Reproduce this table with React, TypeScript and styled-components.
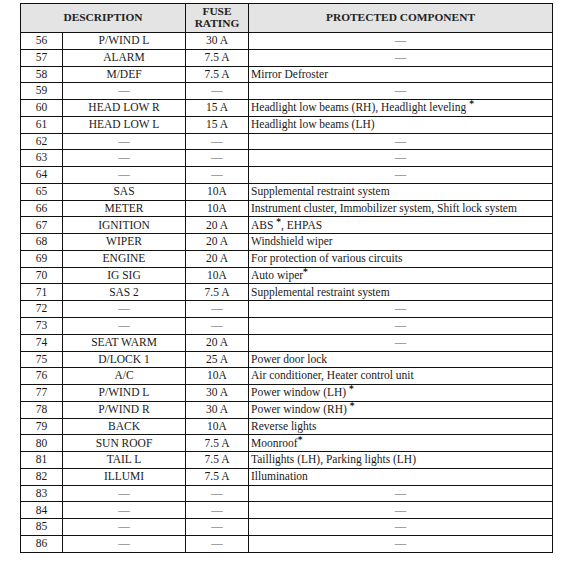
import styled, { createGlobalStyle } from 'styled-components'

const GlobalStyle = createGlobalStyle`
  html, body {
    margin: 0;
    padding: 0;
    background: #ffffff;
  }
  body {
    font-family: "Liberation Serif", "Times New Roman", serif;
    color: #1a1a1a;
  }
`

const Page = styled.div`
  padding: 3px 0 0 20px;
`

const Table = styled.table`
  border-collapse: collapse;
  table-layout: fixed;
  width: 532px;
  font-size: 11.5px;
  line-height: 1;
`

const HeadCell = styled.th`
  background: #e4e4e4;
  border: 1px solid #111;
  font-weight: bold;
  font-size: 11.4px;
  color: #222;
  height: 28px;
  padding: 0;
  text-align: center;
  vertical-align: middle;
  line-height: 1.05;
`

const Cell = styled.td<{ $align?: 'left' | 'center' }>`
  border: 1px solid #111;
  height: 15.77px;
  padding: 0 0 0 ${p => (p.$align === 'left' ? '2px' : '0')};
  text-align: ${p => p.$align ?? 'center'};
  vertical-align: middle;
  white-space: nowrap;
  overflow: hidden;
`

const Dash = styled.span`
  color: #555;
`

const Star = styled.sup`
  font-family: "DejaVu Sans", sans-serif;
  font-size: 9px;
  font-weight: bold;
  line-height: 0;
  vertical-align: 4px;
`

type Row = {
  no: number
  desc?: string
  rating?: string
  comp?: React.ReactNode
}

const rows: Row[] = [
  { no: 56, desc: 'P/WIND L', rating: '30 A' },
  { no: 57, desc: 'ALARM', rating: '7.5 A' },
  { no: 58, desc: 'M/DEF', rating: '7.5 A', comp: 'Mirror Defroster' },
  { no: 59 },
  { no: 60, desc: 'HEAD LOW R', rating: '15 A', comp: <>Headlight low beams (RH), Headlight leveling <Star>*</Star></> },
  { no: 61, desc: 'HEAD LOW L', rating: '15 A', comp: 'Headlight low beams (LH)' },
  { no: 62 },
  { no: 63 },
  { no: 64 },
  { no: 65, desc: 'SAS', rating: '10A', comp: 'Supplemental restraint system' },
  { no: 66, desc: 'METER', rating: '10A', comp: 'Instrument cluster, Immobilizer system, Shift lock system' },
  { no: 67, desc: 'IGNITION', rating: '20 A', comp: <>ABS <Star>*</Star>, EHPAS</> },
  { no: 68, desc: 'WIPER', rating: '20 A', comp: 'Windshield wiper' },
  { no: 69, desc: 'ENGINE', rating: '20 A', comp: 'For protection of various circuits' },
  { no: 70, desc: 'IG SIG', rating: '10A', comp: <>Auto wiper<Star>*</Star></> },
  { no: 71, desc: 'SAS 2', rating: '7.5 A', comp: 'Supplemental restraint system' },
  { no: 72 },
  { no: 73 },
  { no: 74, desc: 'SEAT WARM', rating: '20 A' },
  { no: 75, desc: 'D/LOCK 1', rating: '25 A', comp: 'Power door lock' },
  { no: 76, desc: 'A/C', rating: '10A', comp: 'Air conditioner, Heater control unit' },
  { no: 77, desc: 'P/WIND L', rating: '30 A', comp: <>Power window (LH) <Star>*</Star></> },
  { no: 78, desc: 'P/WIND R', rating: '30 A', comp: <>Power window (RH) <Star>*</Star></> },
  { no: 79, desc: 'BACK', rating: '10A', comp: 'Reverse lights' },
  { no: 80, desc: 'SUN ROOF', rating: '7.5 A', comp: <>Moonroof<Star>*</Star></> },
  { no: 81, desc: 'TAIL L', rating: '7.5 A', comp: 'Taillights (LH), Parking lights (LH)' },
  { no: 82, desc: 'ILLUMI', rating: '7.5 A', comp: 'Illumination' },
  { no: 83 },
  { no: 84 },
  { no: 85 },
  { no: 86 },
]

const dash = <Dash>—</Dash>

export default function App() {
  return (
    <Page>
      <GlobalStyle />
      <Table>
        <colgroup>
          <col style={{ width: 42 }} />
          <col style={{ width: 123 }} />
          <col style={{ width: 63 }} />
          <col style={{ width: 304 }} />
        </colgroup>
        <thead>
          <tr>
            <HeadCell colSpan={2}>DESCRIPTION</HeadCell>
            <HeadCell>
              FUSE
              <br />
              RATING
            </HeadCell>
            <HeadCell>PROTECTED COMPONENT</HeadCell>
          </tr>
        </thead>
        <tbody>
          {rows.map(r => (
            <tr key={r.no}>
              <Cell>{r.no}</Cell>
              <Cell>{r.desc ?? dash}</Cell>
              <Cell>{r.rating ?? dash}</Cell>
              {r.comp ? <Cell $align="left">{r.comp}</Cell> : <Cell>{dash}</Cell>}
            </tr>
          ))}
        </tbody>
      </Table>
    </Page>
  )
}
